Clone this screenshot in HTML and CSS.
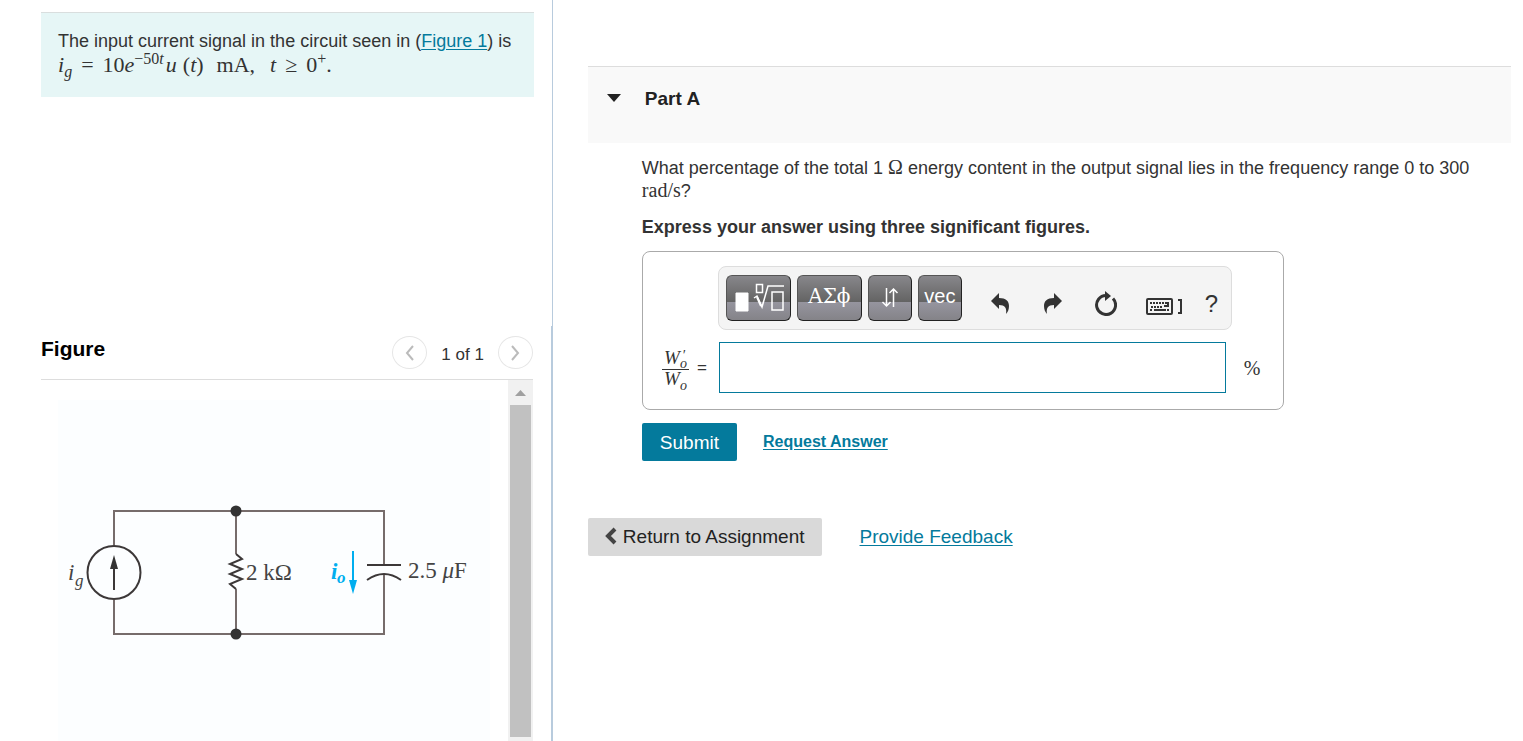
FILE: index.html
```html
<!DOCTYPE html>
<html lang="en">

<head>
    <meta charset="UTF-8">
    <meta name="viewport" content="width=device-width, initial-scale=1.0">
    <title>Part A</title>
    <link rel="stylesheet" href="styles.css">
</head>

<body>
    <div class="page">
        <aside class="sidebar">
            <section class="intro">
                <p>The input current signal in the circuit seen in (<a href="#figure">Figure 1</a>) is</p>
                <p class="math formula">
                    <span><i>i</i><sub><i>g</i></sub></span>
                    <span>=</span>
                    <span>10<i>e</i><sup>−50<i>t</i></sup></span>
                    <span class="tight"><i>u</i></span>
                    <span class="call">(<i>t</i>)</span>
                    <span class="unit">mA,</span>
                    <span><i>t</i></span>
                    <span>≥</span>
                    <span>0<sup>+</sup>.</span>
                </p>
            </section>

            <section id="figure" class="figure">
                <header class="figure-head">
                    <h2>Figure</h2>
                    <nav class="pager">
                        <button type="button" class="round" aria-label="Previous figure">
                            <svg width="10" height="16" viewBox="0 0 10 16"><path d="M8 1 2 8l6 7" /></svg>
                        </button>
                        <span>1 of 1</span>
                        <button type="button" class="round" aria-label="Next figure">
                            <svg width="10" height="16" viewBox="0 0 10 16"><path d="M2 1l6 7-6 7" /></svg>
                        </button>
                    </nav>
                </header>
                <div class="figure-body">
                    <div class="figure-view">
                        <svg class="circuit" viewBox="58 400 432 342" role="img" aria-label="Circuit diagram">
                            <g class="wire">
                                <path d="M114 545V511H384V565M384 574V634H114V600M236 511V554M236 589V634" />
                            </g>
                            <g class="part">
                                <circle cx="114" cy="572.500" r="26.500" />
                                <path d="M236 554l6 5-12 5 12 5-12 5 12 5-12 5 6 5" />
                                <path d="M367 565h34M367 580q17-12 34 0" />
                                <path d="M114 590V565" />
                            </g>
                            <path class="solid" d="M114 555l4 14h-8z" />
                            <circle class="solid" cx="236" cy="511" r="5.500" />
                            <circle class="solid" cx="236" cy="634" r="5.500" />
                            <path class="flow" d="M353 551V583" />
                            <path class="flow-tip" d="M349 580h8l-4 14z" />
                            <text class="it" x="68" y="580">i</text>
                            <text class="it small" x="75" y="586">g</text>
                            <text x="246" y="580">2 kΩ</text>
                            <text class="it blue" x="331" y="579">i</text>
                            <text class="it small blue" x="337" y="583">o</text>
                            <text x="408" y="578">2.5 <tspan class="it">μ</tspan>F</text>
                        </svg>
                    </div>
                    <div class="scrollbar">
                        <svg width="11" height="6" viewBox="0 0 11 6"><path d="M0 6 5.500 0 11 6z" /></svg>
                        <div class="thumb"></div>
                    </div>
                </div>
            </section>
        </aside>

        <main class="content">
            <header class="part-head">
                <svg width="14" height="8" viewBox="0 0 14 8"><path d="M0 0h14L7 8z" /></svg>
                <h2>Part A</h2>
            </header>

            <form class="part-body">
                <p>What percentage of the total 1 <span class="math">Ω</span> energy content in the output signal lies
                    in the frequency range 0 to 300 <span class="math">rad/s</span>?</p>
                <p class="hint">Express your answer using three significant figures.</p>

                <div class="answer">
                    <div class="toolbar">
                        <button type="button" class="key wide" aria-label="Templates">
                            <svg width="53" height="30" viewBox="0 0 53 30">
                                <path class="fill" d="M4 10h12v18H4z" />
                                <path class="frame" d="M24.500 1.500h6v8h-6zM40 9h11v18H40z" />
                                <path class="frame" d="M22 15l3-2 5 11 6-21h16" />
                                <path class="bold" d="M25 14l4 9" />
                            </svg>
                        </button>
                        <button type="button" class="key wide greek">ΑΣϕ</button>
                        <button type="button" class="key" aria-label="Subscript and superscript">
                            <svg width="18" height="20" viewBox="0 0 18 20">
                                <path class="frame" d="M5.500 0v18M1.500 14l4 4 4-4M12.500 19V1M8.500 5l4-4 4 4" />
                            </svg>
                        </button>
                        <button type="button" class="key vec">vec</button>
                        <div class="tools">
                            <button type="button" class="tool" aria-label="Undo">
                                <svg width="19" height="21" viewBox="0 0 19 21">
                                    <path class="fill" d="M0 8 8 0v5c7 0 10 3 10 8 0 3-1 6-3 8 1-6-1-9-7-9v4z" />
                                </svg>
                            </button>
                            <button type="button" class="tool" aria-label="Redo">
                                <svg width="19" height="21" viewBox="0 0 19 21">
                                    <path class="fill" d="M19 8 11 0v5C4 5 1 8 1 13c0 3 1 6 3 8-1-6 1-9 7-9v4z" />
                                </svg>
                            </button>
                            <button type="button" class="tool" aria-label="Reset">
                                <svg width="22" height="25" viewBox="0 0 22 25">
                                    <path class="ring" d="M18 7.500A9.500 9.500 0 1 1 11 4.500" />
                                    <path class="fill" d="M10 0l6 5-6 5z" />
                                </svg>
                            </button>
                            <button type="button" class="tool keyboard" aria-label="Keyboard shortcuts">
                                <svg width="36" height="17" viewBox="0 0 36 17">
                                    <rect class="line" x="1" y="1" width="25" height="15" rx="1" />
                                    <path class="dots" d="M4 5h17M5 9h12M4 12h2M21 12h3" />
                                    <path class="line" d="M8 12h12M22 4v4h-4M32 2h3v13h-3" />
                                </svg>
                            </button>
                            <button type="button" class="tool help" aria-label="Help">?</button>
                        </div>
                    </div>
                    <label class="ratio" for="answer">
                        <span class="fraction math">
                            <span><i>W</i><span class="scripts"><i>′</i><i>o</i></span></span>
                            <span><i>W</i><sub><i>o</i></sub></span>
                        </span>
                        <span>=</span>
                    </label>
                    <input id="answer" class="field" type="text" autocomplete="off">
                    <span class="percent math">%</span>
                </div>

                <div class="actions">
                    <button type="submit" class="submit">Submit</button>
                    <a class="request" href="#">Request Answer</a>
                </div>
            </form>

            <footer class="links">
                <button type="button" class="return">
                    <svg width="12" height="18" viewBox="0 0 12 18"><path d="M10 2 3 9l7 7" /></svg>
                    Return to Assignment
                </button>
                <a href="#">Provide Feedback</a>
            </footer>
        </main>
    </div>
</body>

</html>
```
FILE: styles.css
```css
* {
    box-sizing: border-box;
}

body {
    margin: 0;
    font-family: "Liberation Sans", Arial, sans-serif;
    font-size: 18px;
    line-height: 23px;
    color: #333;
    background: #fff;
}

p,
h2 {
    margin: 0;
}

a {
    color: #047a9c;
    text-underline-offset: 2px;
}

button,
input {
    font: inherit;
    color: inherit;
}

svg {
    display: block;
    fill: none;
}

.page {
    display: flex;
    min-height: 100vh;
}

.math {
    font-family: "Liberation Serif", serif;
    font-size: 20px;
    line-height: 20px;
}

.math sub,
.math sup {
    font-size: 16px;
    line-height: 0;
}

/* left column */
.sidebar {
    width: 36.3%;
    height: 100vh;
    display: flex;
    flex-direction: column;
    justify-content: space-between;
    padding-top: 12px;
    border-right: 1px solid #b8cbdd;
}

.intro {
    margin: 0 18px 0 41px;
    min-height: 85px;
    padding: 17px 17px 12px;
    border-top: 1px solid #d9dede;
    background: #e6f6f6;
}

.formula {
    display: flex;
    align-items: baseline;
    gap: 9px;
    font-size: 22px;
    line-height: 24px;
    white-space: nowrap;
}

.formula .tight {
    margin-left: -7px;
}

.formula .call {
    margin-left: -3px;
}

.formula .unit {
    margin: 0 6px 0 4px;
}

.figure {
    height: 56vh;
    display: flex;
    flex-direction: column;
    padding: 0 18px 0 41px;
    border-right: 1px solid #b8cbdd;
}

.figure-head {
    display: flex;
    justify-content: space-between;
    height: 54px;
    padding-top: 10px;
    border-bottom: 1px solid #ddd;
}

.figure-head h2 {
    font-size: 21px;
    line-height: 26px;
    color: #000;
}

.pager {
    display: flex;
    gap: 14px;
    font-size: 17px;
    line-height: 38px;
}

.round {
    width: 35px;
    height: 33px;
    display: flex;
    align-items: center;
    justify-content: center;
    padding: 0;
    border: 1px solid #e6e6e6;
    border-radius: 50%;
    background: #fff;
}

.round svg {
    stroke: #bbb;
    stroke-width: 2;
}

.figure-body {
    flex: 1;
    min-height: 0;
    display: flex;
}

.figure-view {
    flex: 1;
    overflow: hidden;
    padding: 20px 17px 0;
}

.circuit {
    width: 432px;
    height: 342px;
    background: #fcfeff;
    font-family: "Liberation Serif", serif;
    font-size: 23px;
}

.circuit text {
    fill: #444;
}

.circuit .it {
    font-style: italic;
}

.circuit .small {
    font-size: 17px;
}

.circuit .blue {
    fill: #00aeef;
    font-weight: bold;
}

.wire {
    stroke: #766c6b;
    stroke-width: 2;
}

.part {
    stroke: #3c3838;
    stroke-width: 2;
}

.solid {
    fill: #333;
}

.flow {
    stroke: #00aeef;
    stroke-width: 2;
}

.flow-tip {
    fill: #00aeef;
}

.scrollbar {
    width: 25px;
    display: flex;
    flex-direction: column;
    align-items: center;
    gap: 9px;
    padding: 10px 2px 4px;
    background: #f1f1f1;
}

.scrollbar path {
    fill: #a0a0a0;
}

.thumb {
    flex: 1;
    width: 100%;
    background: #c1c1c1;
}

/* right column */
.content {
    flex: 1;
    min-width: 0;
    padding: 66px 12px 20px 35px;
}

.part-head {
    height: 77px;
    display: flex;
    gap: 24px;
    padding: 20px 19px;
    border-top: 1px solid #ddd;
    background: #f9f9f9;
    color: #222;
}

.part-head svg {
    margin-top: 7px;
    fill: #222;
}

.part-head h2 {
    font-size: 19px;
}

.part-body {
    padding: 14px 20px 0 54px;
}

.hint {
    margin-top: 13px;
    font-weight: bold;
}

.answer {
    max-width: 642px;
    display: grid;
    grid-template-columns: 64px 1fr 45px;
    column-gap: 12px;
    row-gap: 12px;
    margin-top: 12px;
    padding: 14px 0 16px;
    border: 1px solid #aaa;
    border-radius: 8px;
}

.toolbar {
    grid-column: 2 / 4;
    display: flex;
    gap: 6px;
    height: 64px;
    margin: 0 51px 0 -1px;
    padding: 8px 7px;
    border: 1px solid #ddd;
    border-radius: 8px;
    background: #f4f4f4;
}

.key {
    width: 44px;
    height: 46px;
    display: flex;
    align-items: center;
    justify-content: center;
    padding: 0;
    border: 1px solid #222;
    border-top-color: #555;
    border-left-color: #555;
    border-radius: 6px;
    background: linear-gradient(#88878b, #646464 58%, #96959f 59%, #848388);
    color: #fff;
}

.key.wide {
    width: 65px;
}

.key svg {
    stroke: #fff;
    stroke-width: 1;
}

.key .fill {
    fill: #fff;
}

.key .bold {
    stroke-width: 2;
}

.key .frame {
    stroke-width: 1.5;
}

.greek {
    padding-bottom: 3px;
    font-family: "DejaVu Serif", serif;
    font-size: 20px;
}

.vec {
    font-size: 20px;
    padding-bottom: 4px;
}

.tools {
    flex: 1;
    display: flex;
    gap: 33px;
    align-items: center;
    padding: 11px 0 0 23px;
}

.tool {
    padding: 0;
    border: 0;
    background: none;
}

.tool .fill {
    fill: #333;
}

.tool .ring {
    stroke: #333;
    stroke-width: 3;
}

.tool .line {
    stroke: #333;
    stroke-width: 2;
}

.tool .dots {
    stroke: #333;
    stroke-width: 2;
    stroke-dasharray: 2 1;
}

.tool.keyboard {
    margin: 6px -10px 0 -4px;
}

.help {
    font-size: 24px;
}

.ratio {
    display: flex;
    align-items: center;
    justify-content: flex-end;
    gap: 8px;
    font-size: 17px;
}

.fraction {
    font-size: 19px;
    text-align: center;
}

.fraction > span {
    display: block;
    padding: 0 2px;
    line-height: 22px;
}

.fraction > span + span {
    border-top: 1px solid #333;
    line-height: 18px;
}

.fraction sub {
    font-size: 14px;
}

.scripts {
    display: inline-flex;
    flex-direction: column;
    vertical-align: middle;
    font-size: 14px;
    line-height: 8px;
}

.field {
    width: 100%;
    height: 51px;
    padding: 0 12px;
    border: 1px solid #047a9c;
    border-radius: 0;
    background: #fff;
}

.percent {
    align-self: center;
    padding-left: 6px;
}

.actions {
    display: flex;
    align-items: center;
    gap: 26px;
    margin-top: 13px;
}

.submit {
    height: 38px;
    padding: 0 18px;
    border: 0;
    border-radius: 2px;
    background: #047a9c;
    color: #fff;
    font-size: 19px;
}

.request {
    padding-bottom: 2px;
    font-size: 16px;
    font-weight: bold;
}

.links {
    display: flex;
    align-items: center;
    gap: 38px;
    margin-top: 57px;
    font-size: 19px;
}

.links a {
    padding-bottom: 2px;
}

.return {
    height: 38px;
    display: flex;
    align-items: center;
    gap: 6px;
    padding: 0 17px 2px;
    border: 0;
    border-radius: 2px;
    background: #d9d9d9;
    color: #222;
}

.return svg {
    stroke: #444;
    stroke-width: 4;
}
```
